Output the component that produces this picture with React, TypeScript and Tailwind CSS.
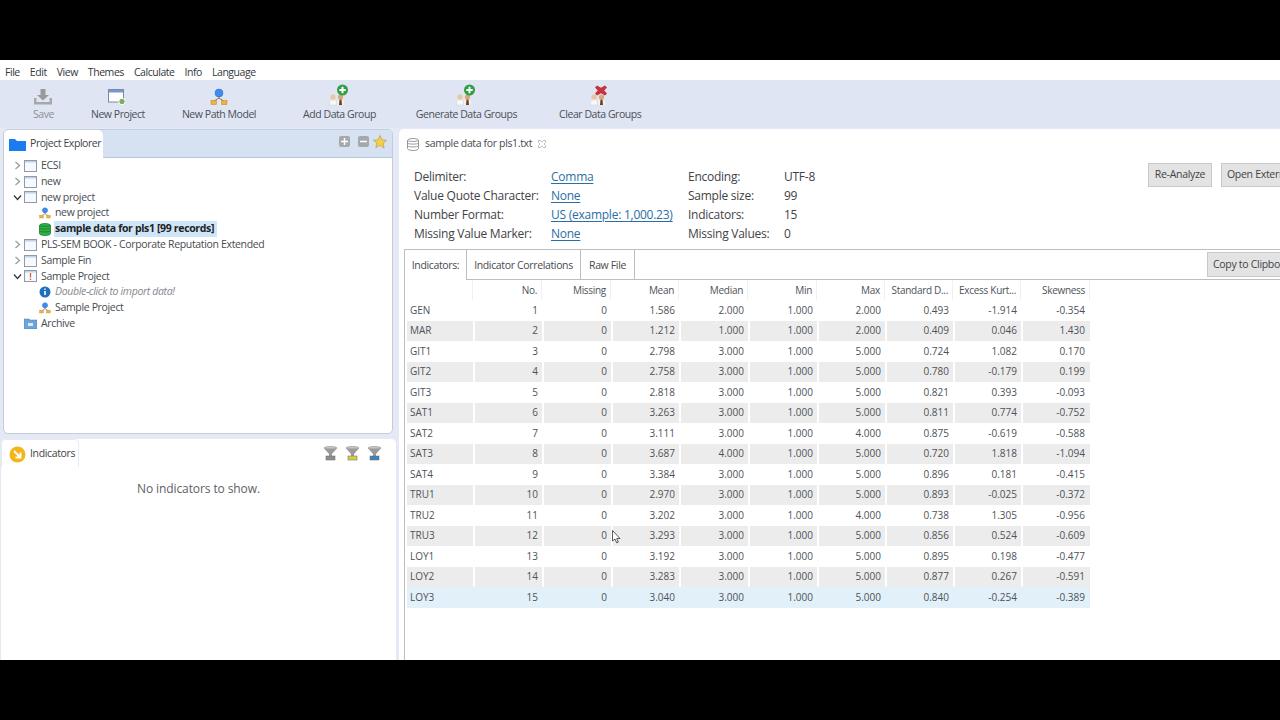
const font = { fontFamily: '"Open Sans", "Noto Sans", sans-serif' };

const menus = ['File', 'Edit', 'View', 'Themes', 'Calculate', 'Info', 'Language'];

const rows = [
  ['GEN', '1', '0', '1.586', '2.000', '1.000', '2.000', '0.493', '-1.914', '-0.354'],
  ['MAR', '2', '0', '1.212', '1.000', '1.000', '2.000', '0.409', '0.046', '1.430'],
  ['GIT1', '3', '0', '2.798', '3.000', '1.000', '5.000', '0.724', '1.082', '0.170'],
  ['GIT2', '4', '0', '2.758', '3.000', '1.000', '5.000', '0.780', '-0.179', '0.199'],
  ['GIT3', '5', '0', '2.818', '3.000', '1.000', '5.000', '0.821', '0.393', '-0.093'],
  ['SAT1', '6', '0', '3.263', '3.000', '1.000', '5.000', '0.811', '0.774', '-0.752'],
  ['SAT2', '7', '0', '3.111', '3.000', '1.000', '4.000', '0.875', '-0.619', '-0.588'],
  ['SAT3', '8', '0', '3.687', '4.000', '1.000', '5.000', '0.720', '1.818', '-1.094'],
  ['SAT4', '9', '0', '3.384', '3.000', '1.000', '5.000', '0.896', '0.181', '-0.415'],
  ['TRU1', '10', '0', '2.970', '3.000', '1.000', '5.000', '0.893', '-0.025', '-0.372'],
  ['TRU2', '11', '0', '3.202', '3.000', '1.000', '4.000', '0.738', '1.305', '-0.956'],
  ['TRU3', '12', '0', '3.293', '3.000', '1.000', '5.000', '0.856', '0.524', '-0.609'],
  ['LOY1', '13', '0', '3.192', '3.000', '1.000', '5.000', '0.895', '0.198', '-0.477'],
  ['LOY2', '14', '0', '3.283', '3.000', '1.000', '5.000', '0.877', '0.267', '-0.591'],
  ['LOY3', '15', '0', '3.040', '3.000', '1.000', '5.000', '0.840', '-0.254', '-0.389'],
];

const headers = ['', 'No.', 'Missing', 'Mean', 'Median', 'Min', 'Max', 'Standard D...', 'Excess Kurt...', 'Skewness'];

const gridCols = 'grid grid-cols-[66px_67px_67px_66px_67px_67px_66px_66px_66px_67px] gap-x-[2px]';

const SaveIcon = () => (
  <svg width="20" height="18" viewBox="0 0 20 18">
    <path d="M7.500 1h5v6h3.500L10 12.500 4 7h3.500z" fill="#9a9a9a" />
    <path d="M1 10v6.500h18V10h-2.500v4h-13v-4z" fill="#a8a8a8" />
  </svg>
);

const NewProjectIcon = () => (
  <svg width="19" height="18" viewBox="0 0 19 18">
    <rect x="0.500" y="1.500" width="15" height="12.500" fill="#fff" stroke="#7c8aa0" />
    <rect x="1" y="2" width="14" height="2.500" fill="#6f9bd1" />
    <circle cx="14" cy="13.500" r="3.200" fill="#7dae5b" stroke="#fff" />
  </svg>
);

const PathModelIcon = ({ size = 18 }: { size?: number }) => (
  <svg width={size} height={size} viewBox="0 0 18 18" className="shrink-0">
    <circle cx="9" cy="5" r="4" fill="#3f8cf0" stroke="#2a6bc4" strokeWidth="0.500" />
    <path d="M9 8v3M4 13l5-3 5 3" stroke="#8a6a2a" strokeWidth="0.800" fill="none" />
    <rect x="1" y="12.500" width="5.500" height="4" fill="#eeb33f" stroke="#b9862a" strokeWidth="0.500" />
    <rect x="11.500" y="12.500" width="5.500" height="4" fill="#eeb33f" stroke="#b9862a" strokeWidth="0.500" />
  </svg>
);

const GroupIcon = ({ clear }: { clear?: boolean }) => (
  <svg width="22" height="22" viewBox="0 0 22 22">
    <circle cx="5" cy="13" r="2.600" fill="#e8c7a0" />
    <path d="M1.500 21v-3.500c0-1 1.500-1.700 3.500-1.700s3.500.7 3.500 1.700V21z" fill="#f7f7f4" stroke="#c9c9c4" strokeWidth="0.400" />
    <circle cx="12.500" cy="13" r="2.600" fill="#d9a877" />
    <path d="M9 21v-3.500c0-1 1.500-1.700 3.500-1.700s3.500.7 3.500 1.700V21z" fill="#f4f1ea" />
    <path d="M11.500 15.500h2l.5 5.500h-3z" fill="#6d4220" />
    {clear ? (
      <path d="M8 1.500l4 2.200 4-2.200 2 2-2.800 3 2.800 3-2 2-4-2.300-4 2.300-2-2 2.800-3-2.800-3z" fill="#c8323a" />
    ) : (
      <>
        <circle cx="14.500" cy="6" r="5.500" fill="#2f9e44" />
        <path d="M14.500 2.800v6.400M11.300 6h6.400" stroke="#fff" strokeWidth="2" />
      </>
    )}
  </svg>
);

const ToolButton = ({ icon, label, muted, className }: { icon: React.ReactNode; label: string; muted?: boolean; className: string }) => (
  <div className={`flex flex-col items-center ${className}`}>
    <div className="h-[22px] flex items-end justify-center">{icon}</div>
    <span className={`mt-[1px] text-[10.5px] tracking-[-0.45px] leading-[14px] whitespace-nowrap ${muted ? 'text-[#8b8f96]' : 'text-[#4b5057]'}`}>{label}</span>
  </div>
);

const ProjectIcon = ({ warn }: { warn?: boolean }) => (
  <svg width="13" height="12" viewBox="0 0 13 12" className="shrink-0">
    <rect x="0.500" y="0.500" width="12" height="11" fill="#f6f9fd" stroke="#8f9bab" />
    <rect x="1" y="1" width="11" height="1.500" fill="#bfd2ea" />
    {warn && <path d="M6.500 3v4.500M6.500 8.500v1.500" stroke="#d9622b" strokeWidth="1.300" />}
  </svg>
);

const Chevron = ({ open }: { open?: boolean }) => (
  <svg width="9" height="9" viewBox="0 0 9 9" className="shrink-0 -mr-[3px]">
    {open ? (
      <path d="M1 2.500l3.500 4 3.500-4" fill="none" stroke="#333" strokeWidth="1.200" />
    ) : (
      <path d="M2.500 1l4 3.500-4 3.500" fill="none" stroke="#999" strokeWidth="1.200" />
    )}
  </svg>
);

const DbIcon = ({ color = '#2fb344', dark = '#146c2a' }: { color?: string; dark?: string }) => (
  <svg width="12" height="13" viewBox="0 0 12 13" className="shrink-0">
    <path d="M.5 2.500C.5 1.300 3 .5 6 .5s5.500.8 5.500 2v8c0 1.200-2.500 2-5.500 2s-5.500-.8-5.500-2z" fill={color} stroke={dark} strokeWidth="0.700" />
    <path d="M.5 5.200c1 1.200 10 1.200 11 0M.5 8c1 1.200 10 1.200 11 0M.5 2.500c1 1.200 10 1.200 11 0" fill="none" stroke={dark} strokeWidth="0.700" />
  </svg>
);

const TreeRow = ({ children, indent = 0 }: { children: React.ReactNode; indent?: number }) => (
  <div className="h-[15.8px] flex items-center gap-[4px] text-[10.5px] tracking-[-0.34px] text-[#474b50] whitespace-nowrap" style={{ paddingLeft: indent }}>
    {children}
  </div>
);

const Funnel = ({ color }: { color: string }) => (
  <svg width="15" height="15" viewBox="0 0 15 15">
    <ellipse cx="7.500" cy="2" rx="6.500" ry="1.500" fill="#c8c8c8" stroke="#8a8a8a" strokeWidth="0.600" />
    <path d="M1.200 2.500L6 8v2h3V8l4.800-5.500z" fill="#9b9b9b" />
    <rect x="3" y="10" width="9" height="4" fill={color} stroke="#666" strokeWidth="0.500" />
  </svg>
);

const InfoLine = ({ label, value, value2, label2 }: { label: string; value: string; label2: string; value2: string }) => (
  <div className="h-[19px] flex items-center text-[12px] tracking-[-0.25px] text-[#3f4347] whitespace-nowrap">
    <span className="w-[137px] shrink-0">{label}</span>
    <span className="w-[137px] shrink-0 text-[#2b6ea6] underline underline-offset-2">{value}</span>
    <span className="w-[96px] shrink-0">{label2}</span>
    <span>{value2}</span>
  </div>
);

const Button = ({ children, className }: { children: React.ReactNode; className: string }) => (
  <div className={`flex items-center bg-[#e3e3e3] border border-[#c9c9c9] text-[10.5px] tracking-[-0.3px] text-[#3f4347] whitespace-nowrap shrink-0 ${className}`}>
    {children}
  </div>
);

export default function App() {
  return (
    <div className="w-[1280px] h-[720px] bg-black py-[60px] overflow-hidden relative" style={font}>
      <div className="h-[600px] flex flex-col bg-[#e4e9f5]">
        <div className="h-[20px] bg-white flex items-center gap-[10px] pl-[5px] pt-[6px] text-[10.5px] tracking-[-0.45px] text-[#33373b]">
          {menus.map((m) => (
            <span key={m}>{m}</span>
          ))}
        </div>

        <div className="h-[48px] bg-[#dfe5f3] flex items-start pt-[4px]">
          <ToolButton className="ml-[33px]" icon={<SaveIcon />} label="Save" muted />
          <ToolButton className="ml-[37px]" icon={<NewProjectIcon />} label="New Project" />
          <ToolButton className="ml-[37px]" icon={<PathModelIcon />} label="New Path Model" />
          <ToolButton className="ml-[47px]" icon={<GroupIcon />} label="Add Data Group" />
          <ToolButton className="ml-[40px]" icon={<GroupIcon />} label="Generate Data Groups" />
          <ToolButton className="ml-[42px]" icon={<GroupIcon clear />} label="Clear Data Groups" />
        </div>

        <div className="flex-1 flex min-h-0 pt-[1px]">
          <div className="w-[396px] shrink-0 flex flex-col">
            <div className="h-[305px] ml-[3px] mr-[3px] border border-[#c3cedd] rounded-[5px] bg-white overflow-hidden">
              <div className="h-[28px] bg-[#d6e1f1] border-b border-[#b9c6d9] flex justify-between">
                <div className="w-[99px] h-[28px] bg-white rounded-t-[5px] flex items-center gap-[4px] pl-[5px] text-[10.5px] tracking-[-0.44px] text-[#3f4347] whitespace-nowrap">
                  <svg width="17" height="13" viewBox="0 0 17 13" className="shrink-0">
                    <path d="M0 1h6l2 2h9v10H0z" fill="#1a7cf0" />
                  </svg>
                  Project Explorer
                </div>
                <div className="flex items-center gap-[8px] pr-[5px] pb-[4px]">
                  <span className="w-[11px] h-[11px] bg-[#a5a9ad] rounded-[2px] flex items-center justify-center">
                    <svg width="7" height="7" viewBox="0 0 7 7"><path d="M3.500 0v7M0 3.500h7" stroke="#fff" strokeWidth="1.500" /></svg>
                  </span>
                  <span className="w-[11px] h-[11px] bg-[#a5a9ad] rounded-[2px] flex items-center justify-center">
                    <svg width="7" height="7" viewBox="0 0 7 7"><path d="M0 3.500h7" stroke="#fff" strokeWidth="1.500" /></svg>
                  </span>
                  <svg width="14" height="14" viewBox="0 0 14 14" className="-ml-[4px]">
                    <path d="M7 .5l2 4.300 4.600.5-3.400 3.200.9 4.600L7 10.300l-4.100 2.300.9-4.600L.4 5.300 5 4.800z" fill="#f5cf4a" stroke="#b9953a" strokeWidth="0.600" />
                  </svg>
                </div>
              </div>
              <div className="pl-[9px]">
                <TreeRow><Chevron /><span className="ml-[1px] flex"><ProjectIcon /></span><span>ECSI</span></TreeRow>
                <TreeRow><Chevron /><span className="ml-[1px] flex"><ProjectIcon /></span><span>new</span></TreeRow>
                <TreeRow><Chevron open /><span className="ml-[1px] flex"><ProjectIcon /></span><span>new project</span></TreeRow>
                <TreeRow indent={26}><PathModelIcon size={12} /><span>new project</span></TreeRow>
                <TreeRow indent={26}>
                  <DbIcon />
                  <span className="-ml-[1px] font-bold text-[#222] bg-[#cfe6f8] h-[16px] flex items-center pr-[3px] pl-[1px]">sample data for pls1 [99 records]</span>
                </TreeRow>
                <TreeRow><Chevron /><span className="ml-[1px] flex"><ProjectIcon /></span><span>PLS-SEM BOOK - Corporate Reputation Extended</span></TreeRow>
                <TreeRow><Chevron /><span className="ml-[1px] flex"><ProjectIcon /></span><span>Sample Fin</span></TreeRow>
                <TreeRow><Chevron open /><span className="ml-[1px] flex"><ProjectIcon warn /></span><span>Sample Project</span></TreeRow>
                <TreeRow indent={26}>
                  <svg width="12" height="12" viewBox="0 0 12 12" className="shrink-0">
                    <circle cx="6" cy="6" r="5.500" fill="#1f6fbf" />
                    <path d="M6 5v4M6 2.500v1.300" stroke="#fff" strokeWidth="1.600" />
                  </svg>
                  <span className="italic text-[#85898e]">Double-click to import data!</span>
                </TreeRow>
                <TreeRow indent={26}><PathModelIcon size={12} /><span>Sample Project</span></TreeRow>
                <TreeRow indent={11}>
                  <svg width="13" height="11" viewBox="0 0 13 11" className="shrink-0">
                    <path d="M0 1h5l1 1h7v9H0z" fill="#6ea4d8" stroke="#4f7fae" strokeWidth="0.500" />
                    <rect x="4" y="5" width="5" height="3" fill="#dbe9f6" />
                  </svg>
                  <span>Archive</span>
                </TreeRow>
              </div>
            </div>

            <div className="mt-[5px] flex-1 bg-white rounded-t-[5px] ml-[1px] relative">
              <div className="h-[28px] flex justify-between items-center">
                <div className="w-[78px] h-[28px] pt-[1px] border border-b-0 border-[#e8ebf2] rounded-t-[5px] flex items-center gap-[4px] pl-[7px] text-[10.5px] tracking-[-0.35px] text-[#3f4347]">
                  <svg width="17" height="17" viewBox="0 0 17 17" className="shrink-0">
                    <circle cx="8.500" cy="8.500" r="8" fill="#f3b51a" />
                    <path d="M5 5l6 6M11.500 6.500v5h-5" stroke="#fff" strokeWidth="1.800" fill="none" />
                  </svg>
                  Indicators
                </div>
                <div className="flex gap-[7px] pr-[14px]">
                  <Funnel color="#8e8e8e" />
                  <Funnel color="#d6cf3c" />
                  <Funnel color="#3d85bd" />
                </div>
              </div>
              <p className="mt-[13px] text-center text-[12px] tracking-[-0.1px] text-[#5d6166]">No indicators to show.</p>
            </div>
          </div>

          <div className="ml-[3px] flex-1 min-w-0 bg-white rounded-tl-[5px] overflow-hidden flex flex-col">
            <div className="h-[30px] flex">
              <div className="w-[152px] h-[30px] flex items-center gap-[6px] pl-[8px] text-[10.5px] tracking-[-0.35px] text-[#474b50] whitespace-nowrap">
                <DbIcon color="#fff" dark="#6d7278" />
                sample data for pls1.txt
                <svg width="8" height="8" viewBox="0 0 8 8" className="shrink-0">
                  <path d="M.5.500h2L4 2 5.500.500h2v2L6 4l1.500 1.500v2h-2L4 6 2.500 7.500h-2v-2L2 4 .5 2.500z" fill="none" stroke="#a6a6a6" strokeWidth="0.700" />
                </svg>
              </div>
            </div>

            <div className="h-[90px] flex pl-[15px] pt-[8.5px] text-nowrap">
              <div className="w-[734px] shrink-0">
                <InfoLine label="Delimiter:" value="Comma" label2="Encoding:" value2="UTF-8" />
                <InfoLine label="Value Quote Character:" value="None" label2="Sample size:" value2="99" />
                <InfoLine label="Number Format:" value="US (example: 1,000.23)" label2="Indicators:" value2="15" />
                <InfoLine label="Missing Value Marker:" value="None" label2="Missing Values:" value2="0" />
              </div>
              <Button className="h-[24px] w-[64px] justify-center -mt-[4.5px]">Re-Analyze</Button>
              <Button className="h-[24px] px-[5px] -mt-[4.5px] ml-[9px]">Open External Editor</Button>
            </div>

            <div className="ml-[5px] flex-1 border-l border-t border-[#bdbdbd] flex flex-col min-h-0">
              <div className="h-[30px] flex relative shrink-0">
                <div className="w-[62px] flex items-center justify-center pt-[2px] text-[10.5px] tracking-[-0.35px] text-[#474b50] border-r border-[#bdbdbd]">Indicators:</div>
                <div className="w-[114px] flex items-center justify-center pt-[2px] text-[10.5px] tracking-[-0.35px] text-[#474b50] border-r border-b border-[#bdbdbd] whitespace-nowrap">Indicator Correlations</div>
                <div className="w-[54px] flex items-center justify-center pt-[2px] text-[10.5px] tracking-[-0.35px] text-[#474b50] border-r border-b border-[#bdbdbd] whitespace-nowrap">Raw File</div>
                <div className="flex-1 border-b border-[#bdbdbd] flex pl-[572px] min-w-0">
                  <Button className="h-[25px] px-[5px] mt-[2px]">Copy to Clipboard</Button>
                </div>
              </div>
              <div className="pl-[2px] text-[10px] text-[#4e5257]">
                <div className={`${gridCols} h-[20px] items-center w-fit tracking-[-0.3px]`}>
                  {headers.map((h, i) => (
                    <div key={i} className="h-full flex items-center justify-end pr-[4px] border-r border-[#f0f0f0] whitespace-nowrap">{h}</div>
                  ))}
                </div>
                {rows.map((r, i) => (
                  <div key={r[0]} className={`${gridCols} h-[20.5px] w-fit ${i === 14 ? 'bg-[#e2f0fa]' : ''}`}>
                    {r.map((c, j) => (
                      <div
                        key={j}
                        className={`flex items-center ${j === 0 ? 'justify-start pl-[3px]' : j === 9 ? 'justify-end pr-[5px]' : 'justify-end pr-[4px]'} ${i % 2 === 1 && i !== 14 ? 'bg-[#ececec]' : ''}`}
                      >
                        {c}
                      </div>
                    ))}
                  </div>
                ))}
              </div>
            </div>
          </div>
        </div>
      </div>
      <svg width="9" height="14" viewBox="0 0 9 14" className="absolute left-[612px] top-[530px]">
        <path d="M.5.500v10.500l2.500-2 1.700 3.800 1.600-.7L4.700 8.500H8z" fill="#fff" stroke="#333" strokeWidth="0.800" />
      </svg>
    </div>
  );
}
